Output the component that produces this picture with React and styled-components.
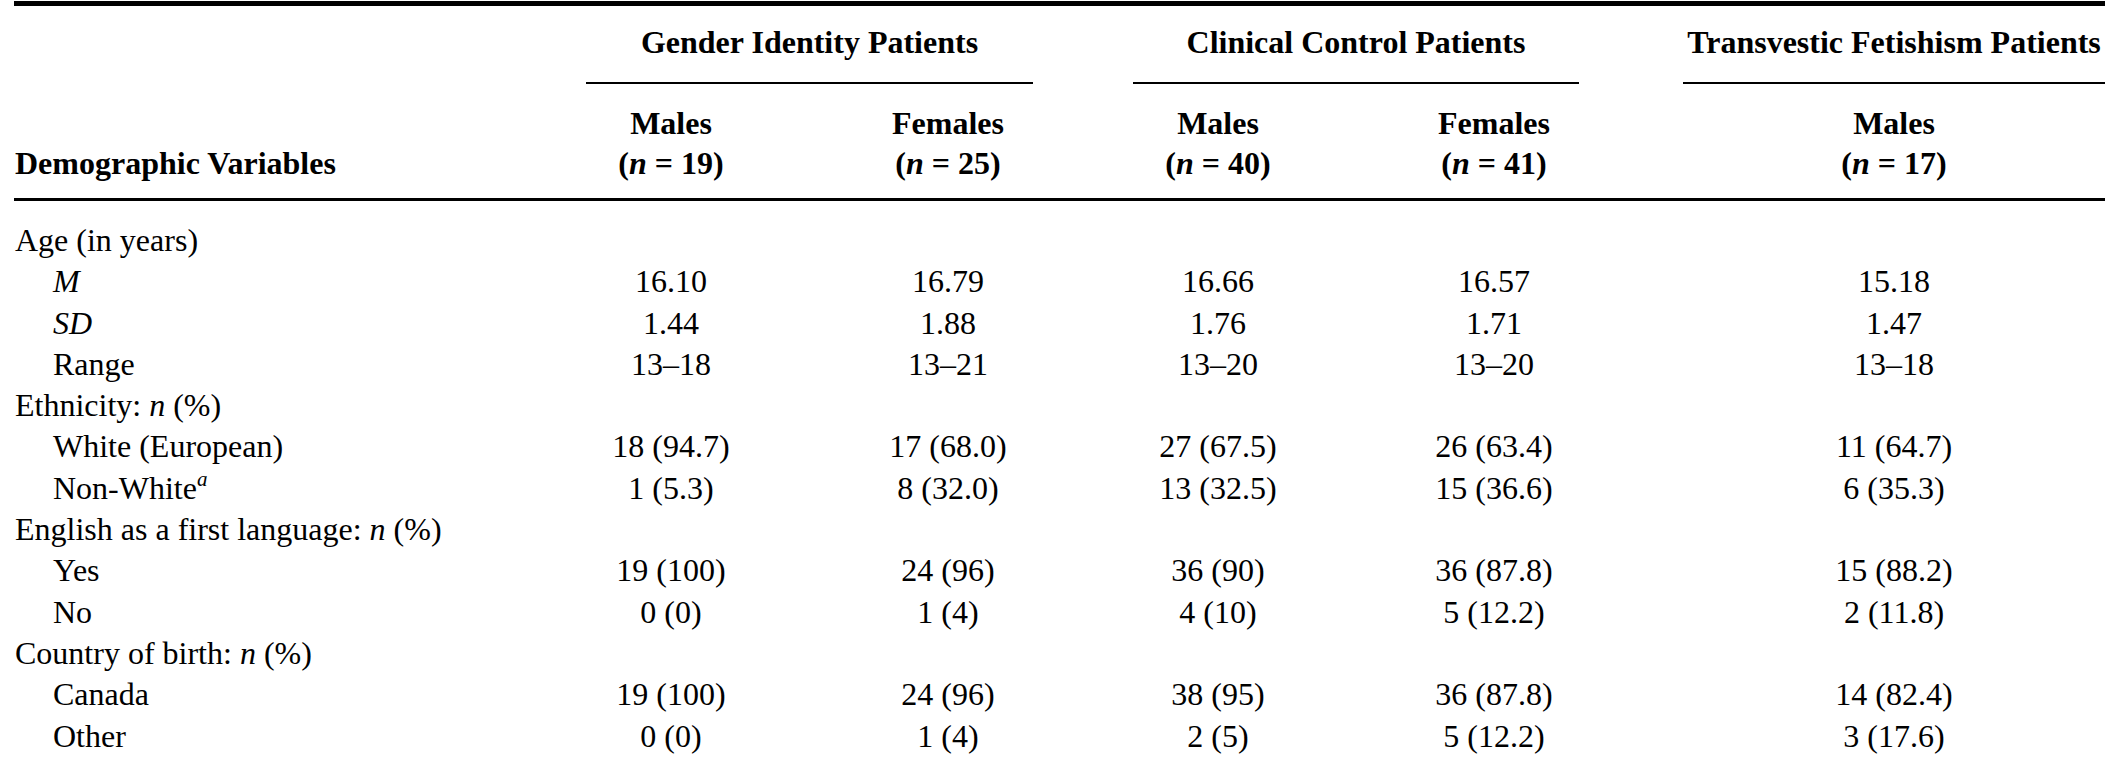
import React from "react";
import styled, { createGlobalStyle } from "styled-components";

const GlobalStyle = createGlobalStyle`
  html, body {
    margin: 0;
    padding: 0;
    background: #fff;
  }
  body {
    font-family: "Liberation Serif", "Times New Roman", serif;
    color: #000;
  }
`;

// label | m1 | gap | f1 | gap | m2 | gap | f2 | gap | m3
const COLS =
  "572px 170px 107px 170px 100px 170px 106px 170px 104px 422px";

const Table = styled.div`
  width: 2091px;
  margin: 1px 0 0 14px;
  font-size: 32px;
`;

const TopRule = styled.div`
  height: 5px;
  background: #000;
`;

const Head = styled.div`
  display: grid;
  grid-template-columns: ${COLS};
  border-bottom: 3px solid #000;
  padding-bottom: 15px;
`;

const Group = styled.div`
  grid-column: ${(p) => p.$col};
  grid-row: 1;
  display: flex;
  flex-direction: column;
  align-items: center;
  padding-top: 16px;
  font-weight: 700;
  line-height: 40px;
  white-space: nowrap;
`;

const GroupRule = styled.div`
  align-self: stretch;
  height: 2px;
  margin-top: 20px;
  background: #000;
`;

const VarHead = styled.div`
  grid-column: 1;
  grid-row: 2;
  align-self: end;
  font-weight: 700;
  line-height: 40px;
  padding-left: 1px;
  white-space: nowrap;
`;

const SubHead = styled.div`
  grid-column: ${(p) => p.$col};
  grid-row: 2;
  display: flex;
  flex-direction: column;
  align-items: center;
  padding-top: 19px;
  font-weight: 700;
  line-height: 40px;
  white-space: nowrap;
`;

const Body = styled.div`
  padding-top: 19px;
`;

const Row = styled.div`
  display: grid;
  grid-template-columns: ${COLS};
  line-height: 41.3px;
  height: 41.3px;
`;

const Label = styled.div`
  grid-column: 1;
  padding-left: ${(p) => (p.$indent ? "39px" : "1px")};
  white-space: nowrap;
`;

const Cell = styled.div`
  grid-column: ${(p) => p.$col};
  display: flex;
  justify-content: center;
  white-space: nowrap;
`;

const Sup = styled.sup`
  font-style: italic;
  font-size: 21px;
  line-height: 0;
  vertical-align: 13px;
`;

const VALUE_COLS = [2, 4, 6, 8, 10];

const groups = [
  { title: "Gender Identity Patients", col: "2 / 5" },
  { title: "Clinical Control Patients", col: "6 / 9" },
  { title: "Transvestic Fetishism Patients", col: "10" },
];

const subs = [
  { sex: "Males", n: 19 },
  { sex: "Females", n: 25 },
  { sex: "Males", n: 40 },
  { sex: "Females", n: 41 },
  { sex: "Males", n: 17 },
];

const rows = [
  { label: "Age (in years)" },
  { label: <i>M</i>, values: ["16.10", "16.79", "16.66", "16.57", "15.18"] },
  { label: <i>SD</i>, values: ["1.44", "1.88", "1.76", "1.71", "1.47"] },
  { label: "Range", values: ["13–18", "13–21", "13–20", "13–20", "13–18"] },
  { label: <>Ethnicity: <i>n</i> (%)</> },
  { label: "White (European)", values: ["18 (94.7)", "17 (68.0)", "27 (67.5)", "26 (63.4)", "11 (64.7)"] },
  { label: <>Non-White<Sup>a</Sup></>, values: ["1 (5.3)", "8 (32.0)", "13 (32.5)", "15 (36.6)", "6 (35.3)"] },
  { label: <>English as a first language: <i>n</i> (%)</> },
  { label: "Yes", values: ["19 (100)", "24 (96)", "36 (90)", "36 (87.8)", "15 (88.2)"] },
  { label: "No", values: ["0 (0)", "1 (4)", "4 (10)", "5 (12.2)", "2 (11.8)"] },
  { label: <>Country of birth: <i>n</i> (%)</> },
  { label: "Canada", values: ["19 (100)", "24 (96)", "38 (95)", "36 (87.8)", "14 (82.4)"] },
  { label: "Other", values: ["0 (0)", "1 (4)", "2 (5)", "5 (12.2)", "3 (17.6)"] },
];

export default function App() {
  return (
    <>
      <GlobalStyle />
      <Table>
        <TopRule />
        <Head>
          {groups.map((g) => (
            <Group key={g.title} $col={g.col}>
              {g.title}
              <GroupRule />
            </Group>
          ))}
          <VarHead>Demographic Variables</VarHead>
          {subs.map((s, i) => (
            <SubHead key={i} $col={VALUE_COLS[i]}>
              <span>{s.sex}</span>
              <span>
                (<i>n</i> = {s.n})
              </span>
            </SubHead>
          ))}
        </Head>
        <Body>
          {rows.map((r, i) => (
            <Row key={i}>
              <Label $indent={!!r.values}>{r.label}</Label>
              {r.values &&
                r.values.map((v, j) => (
                  <Cell key={j} $col={VALUE_COLS[j]}>
                    {v}
                  </Cell>
                ))}
            </Row>
          ))}
        </Body>
      </Table>
    </>
  );
}
